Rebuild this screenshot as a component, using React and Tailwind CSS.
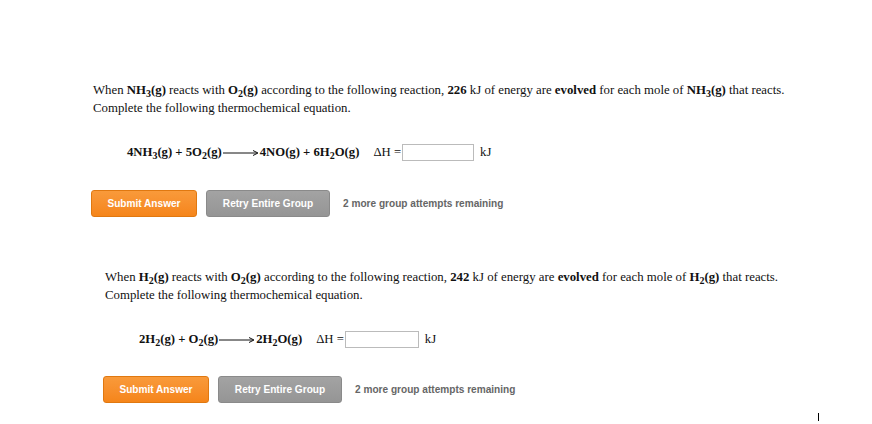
import React from 'react';

const Arrow = () => (
  <svg width="36" height="8" viewBox="0 0 36 8" className="mx-[1px]">
    <line x1="0" y1="4" x2="34" y2="4" stroke="#111" strokeWidth="1" />
    <path d="M30 1.5 L35 4 L30 6.5" fill="none" stroke="#111" strokeWidth="1" />
  </svg>
);

const Sub = ({ children }) => (
  <sub className="text-[10px] relative top-[3px] align-baseline">{children}</sub>
);

const Buttons = () => (
  <div className="flex items-center font-['Liberation_Sans',Arial,sans-serif] text-[10.1px] font-bold">
    <button className="h-[27px] w-[106px] rounded-[3px] border border-[#e07810] bg-gradient-to-b from-[#f99a3a] to-[#f5851a] text-white">
      Submit Answer
    </button>
    <button className="ml-[9px] h-[27px] w-[124px] rounded-[3px] border border-[#8a8a8a] bg-gradient-to-b from-[#a3a3a3] to-[#959595] text-white">
      Retry Entire Group
    </button>
    <span className="ml-[13px] text-[#666]">2 more group attempts remaining</span>
  </div>
);

const Question = ({ reactant, amount, equation, boxW, className }) => (
  <div className={className}>
    <p className="text-[12.8px] leading-[18px] text-[#111]">
      When <b>{reactant}</b> reacts with{' '}
      <b>
        O<Sub>2</Sub>(g)
      </b>{' '}
      according to the following reaction, <b>{amount}</b> kJ of energy are <b>evolved</b> for each mole of{' '}
      <b>{reactant}</b> that reacts.
      <br />
      Complete the following thermochemical equation.
    </p>
    <div className="mt-[26px] ml-[34px] flex items-center text-[12.7px] text-[#111]">
      {equation}
      <span className="ml-[14px]">ΔH =</span>
      <input
        type="text"
        className="ml-[1px] h-[17px] border border-[#bbb] bg-white"
        style={{ width: boxW }}
      />
      <span className="ml-[6px]">kJ</span>
    </div>
  </div>
);

export default function App() {
  return (
    <div className="relative h-[424px] w-[872px] bg-white font-['Liberation_Serif','Times_New_Roman',serif]">
      <div className="pt-[81px] pl-[93px]">
        <Question
          reactant={
            <>
              NH<Sub>3</Sub>(g)
            </>
          }
          amount="226"
          boxW={72}
          equation={
            <span className="flex items-center font-bold">
              <span>
                4NH<Sub>3</Sub>(g) + 5O<Sub>2</Sub>(g)
              </span>
              <Arrow />
              <span>
                4NO(g) + 6H<Sub>2</Sub>O(g)
              </span>
            </span>
          }
        />
        <div className="mt-[28px] -ml-[2px]">
          <Buttons />
        </div>
      </div>

      <div className="pt-[51px] pl-[105px]">
        <Question
          reactant={
            <>
              H<Sub>2</Sub>(g)
            </>
          }
          amount="242"
          boxW={74}
          equation={
            <span className="flex items-center font-bold">
              <span>
                2H<Sub>2</Sub>(g) + O<Sub>2</Sub>(g)
              </span>
              <Arrow />
              <span>
                2H<Sub>2</Sub>O(g)
              </span>
            </span>
          }
        />
        <div className="mt-[27px] -ml-[2px]">
          <Buttons />
        </div>
      </div>

      <div className="absolute left-[818px] top-[413px] h-[8px] w-[1px] bg-black" />
    </div>
  );
}
